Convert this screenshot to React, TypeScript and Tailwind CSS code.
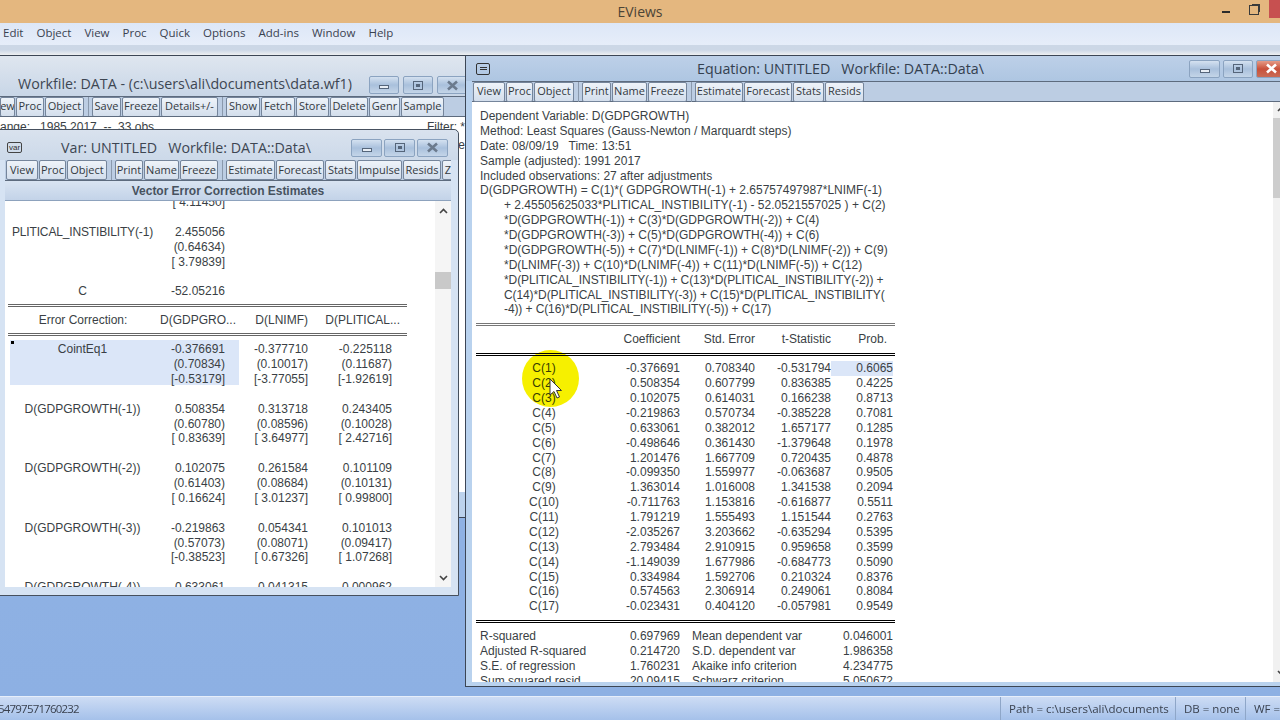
import type { ReactNode } from 'react'

const sans = "font-['Liberation_Sans',Arial,sans-serif]"
const ui = "font-['Open_Sans','Noto_Sans',sans-serif]"

function ToolBtn({ label, w }: { label: string; w: string }) {
  return (
    <div className={`${w} h-[20px] shrink-0 overflow-hidden flex items-center justify-center border border-[#75859b] rounded-[2px] bg-gradient-to-b from-[#eef3f9] to-[#d3deec] text-[11px] text-[#33393f] whitespace-nowrap`}>
      {label}
    </div>
  )
}

function Sep() {
  return <div className="w-[6px] h-[20px] shrink-0 flex justify-center"><div className="w-[1px] h-full bg-[#8a99ad]" /></div>
}

function WinBtn({ kind, w, red }: { kind: 'min' | 'max' | 'close'; w: string; red?: boolean }) {
  return (
    <div className={`${w} h-[18px] shrink-0 flex items-center justify-center border border-[#8ba3c0] rounded-[2px] ${red ? 'bg-gradient-to-b from-[#e49a86] via-[#c8503a] to-[#c96b55]' : 'bg-gradient-to-b from-[#d4e1f0] via-[#a9c0dc] to-[#c4d5e8]'}`}>
      {kind === 'min' && <div className="w-[10px] h-[4px] mt-[4px] border border-[#55657a] bg-[#e8eef5]" />}
      {kind === 'max' && <div className="w-[10px] h-[9px] border border-[#55657a] flex items-center justify-center"><div className="w-[4px] h-[3px] bg-[#55657a]" /></div>}
      {kind === 'close' && (
        <svg width="13" height="11" viewBox="0 0 13 11">
          <path d="M2 1.5 L11 9.5 M11 1.5 L2 9.5" stroke={red ? '#ffffff' : '#6b7a8d'} strokeWidth="2.6" />
        </svg>
      )}
    </div>
  )
}

function Double({ className }: { className: string }) {
  return <div className={`h-[3px] border-y ${className}`} />
}

function ScrollArrow({ up }: { up: boolean }) {
  return (
    <svg width="9" height="6" viewBox="0 0 9 6" className="shrink-0">
      <path d={up ? 'M1 5 L4.5 1.5 L8 5' : 'M1 1 L4.5 4.5 L8 1'} fill="none" stroke="#444" strokeWidth="1.6" />
    </svg>
  )
}

type Row = [string, string, string, string]

const varBlocks: Row[][] = [
  [['D(GDPGROWTH(-1))', '0.508354', '0.313718', '0.243405'], ['', '(0.60780)', '(0.08596)', '(0.10028)'], ['', '[ 0.83639]', '[ 3.64977]', '[ 2.42716]']],
  [['D(GDPGROWTH(-2))', '0.102075', '0.261584', '0.101109'], ['', '(0.61403)', '(0.08684)', '(0.10131)'], ['', '[ 0.16624]', '[ 3.01237]', '[ 0.99800]']],
  [['D(GDPGROWTH(-3))', '-0.219863', '0.054341', '0.101013'], ['', '(0.57073)', '(0.08071)', '(0.09417)'], ['', '[-0.38523]', '[ 0.67326]', '[ 1.07268]']],
  [['D(GDPGROWTH(-4))', '0.633061', '0.041315', '0.000962']],
]

const coef: string[][] = [
  ['C(1)', '-0.376691', '0.708340', '-0.531794', '0.6065'],
  ['C(2)', '0.508354', '0.607799', '0.836385', '0.4225'],
  ['C(3)', '0.102075', '0.614031', '0.166238', '0.8713'],
  ['C(4)', '-0.219863', '0.570734', '-0.385228', '0.7081'],
  ['C(5)', '0.633061', '0.382012', '1.657177', '0.1285'],
  ['C(6)', '-0.498646', '0.361430', '-1.379648', '0.1978'],
  ['C(7)', '1.201476', '1.667709', '0.720435', '0.4878'],
  ['C(8)', '-0.099350', '1.559977', '-0.063687', '0.9505'],
  ['C(9)', '1.363014', '1.016008', '1.341538', '0.2094'],
  ['C(10)', '-0.711763', '1.153816', '-0.616877', '0.5511'],
  ['C(11)', '1.791219', '1.555493', '1.151544', '0.2763'],
  ['C(12)', '-2.035267', '3.203662', '-0.635294', '0.5395'],
  ['C(13)', '2.793484', '2.910915', '0.959658', '0.3599'],
  ['C(14)', '-1.149039', '1.677986', '-0.684773', '0.5090'],
  ['C(15)', '0.334984', '1.592706', '0.210324', '0.8376'],
  ['C(16)', '0.574563', '2.306914', '0.249061', '0.8084'],
  ['C(17)', '-0.023431', '0.404120', '-0.057981', '0.9549'],
]

const stats: string[][] = [
  ['R-squared', '0.697969', 'Mean dependent var', '0.046001'],
  ['Adjusted R-squared', '0.214720', 'S.D. dependent var', '1.986358'],
  ['S.E. of regression', '1.760231', 'Akaike info criterion', '4.234775'],
  ['Sum squared resid', '20.09415', 'Schwarz criterion', '5.050672'],
]

const eqHead = [
  'Dependent Variable: D(GDPGROWTH)',
  'Method: Least Squares (Gauss-Newton / Marquardt steps)',
  'Date: 08/09/19   Time: 13:51',
  'Sample (adjusted): 1991 2017',
  'Included observations: 27 after adjustments',
  'D(GDPGROWTH) = C(1)*( GDPGROWTH(-1) + 2.65757497987*LNIMF(-1)',
]

const eqIndent = [
  '+ 2.45505625033*PLITICAL_INSTIBILITY(-1) - 52.0521557025 ) + C(2)',
  '*D(GDPGROWTH(-1)) + C(3)*D(GDPGROWTH(-2)) + C(4)',
  '*D(GDPGROWTH(-3)) + C(5)*D(GDPGROWTH(-4)) + C(6)',
  '*D(GDPGROWTH(-5)) + C(7)*D(LNIMF(-1)) + C(8)*D(LNIMF(-2)) + C(9)',
  '*D(LNIMF(-3)) + C(10)*D(LNIMF(-4)) + C(11)*D(LNIMF(-5)) + C(12)',
  '*D(PLITICAL_INSTIBILITY(-1)) + C(13)*D(PLITICAL_INSTIBILITY(-2)) +',
  'C(14)*D(PLITICAL_INSTIBILITY(-3)) + C(15)*D(PLITICAL_INSTIBILITY(',
  '-4)) + C(16)*D(PLITICAL_INSTIBILITY(-5)) + C(17)',
]

const varGrid = 'grid grid-cols-[149px_68px_83px_84px] w-[384px] leading-[14.875px] h-[14.875px] whitespace-pre'
const eqCols = 'grid grid-cols-[136px_68px_75px_76px_62px] w-[417px]'

function VarRow({ row }: { row: Row }) {
  return (
    <div className={varGrid}>
      <div className="text-center">{row[0].startsWith('PLITICAL') ? <span className="tracking-[-0.15px]">{row[0]}</span> : row[0]}</div>
      <div className="text-right">{row[1]}</div>
      <div className="text-right">{row[2]}</div>
      <div className="text-right">{row[3]}</div>
    </div>
  )
}

function Toolbar({ children, className }: { children: ReactNode; className: string }) {
  return <div className={`flex gap-[1px] items-center h-[21px] ${ui} ${className}`}>{children}</div>
}

export default function App() {
  return (
    <div className={`w-[1280px] h-[720px] overflow-hidden flex flex-col relative ${sans} text-[12px] text-[#3a3f45]`}>
      {/* app title bar */}
      <div className="h-[23px] shrink-0 bg-[#e4b77f] flex items-start relative">
        <div className={`w-full text-center text-[14px] leading-[23px] text-[#4b4436] ${ui}`}>EViews</div>
        <div className="absolute right-0 top-0 flex items-start">
          <div className="w-[8px] h-[2px] mt-[11px] bg-[#2b2b2b] mr-[19px]" />
          <div className="w-[10px] h-[10px] mt-[5px] mr-[10px] border border-[#3a3a3a] shadow-[2px_-2px_0_-1px_#3a3a3a]" />
          <div className="w-[11px] h-[18px] bg-[#c75050]" />
        </div>
      </div>

      {/* menu */}
      <div className={`h-[22px] shrink-0 pb-[3px] bg-gradient-to-b from-[#dde7f7] to-[#e6edf9] flex items-center gap-[13px] pl-[3px] text-[11.5px] text-[#3a4250] ${ui}`}>
        {['Edit', 'Object', 'View', 'Proc', 'Quick', 'Options', 'Add-ins', 'Window', 'Help'].map((m) => <span key={m}>{m}</span>)}
      </div>
      <div className="h-[10px] shrink-0 bg-gradient-to-b from-[#ccd7e6] via-[#ccd7e6] to-[#eef0f2]" />

      {/* mdi area */}
      <div className="flex-1 relative bg-gradient-to-b from-[#94b6e6] to-[#8db0e3] border-b border-[#e6eefa]">
        {/* workfile window, behind */}
        <div className="absolute left-[-10px] top-0 w-[490px] h-[463px] border border-[#3c4655] bg-[#bcd2ec] flex flex-col">
          <div className="h-[40px] shrink-0 flex items-end pb-[2px] pl-[27px] bg-gradient-to-b from-[#dfe6ef] to-[#c8d6e7]">
            <div className={`w-[351px] text-[14.25px] leading-[20px] text-[#3d4652] whitespace-nowrap ${ui}`}>{'Workfile: DATA - (c:\\users\\ali\\documents\\data.wf1)'}</div>
            <div className="flex gap-[4px]">
              <WinBtn kind="min" w="w-[30px]" />
              <WinBtn kind="max" w="w-[30px]" />
              <WinBtn kind="close" w="w-[30px]" />
            </div>
          </div>
          <Toolbar className="shrink-0 bg-[#bccde3] border-y border-[#5d6b7e] pl-[9px] overflow-hidden">
            <ToolBtn label="ew" w="w-[15px]" />
            <ToolBtn label="Proc" w="w-[28px]" />
            <ToolBtn label="Object" w="w-[39px]" />
            <Sep />
            <ToolBtn label="Save" w="w-[29px]" />
            <ToolBtn label="Freeze" w="w-[38px]" />
            <ToolBtn label="Details+/-" w="w-[57px]" />
            <Sep />
            <ToolBtn label="Show" w="w-[34px]" />
            <ToolBtn label="Fetch" w="w-[34px]" />
            <ToolBtn label="Store" w="w-[33px]" />
            <ToolBtn label="Delete" w="w-[38px]" />
            <ToolBtn label="Genr" w="w-[31px]" />
            <ToolBtn label="Sample" w="w-[43px]" />
          </Toolbar>
          <div className="flex-1 bg-white mb-[25px] pl-[9px] pr-[14px] whitespace-pre leading-[20px]">
            <div className="flex justify-between">
              <span>{'ange:   1985 2017  --  33 obs'}</span>
              <span>Filter: *</span>
            </div>
            <div className="text-right leading-[16px]">e</div>
          </div>
        </div>

        {/* var window */}
        <div className="absolute left-[-2px] top-[74px] w-[461px] h-[467px] border border-[#46505e] rounded-tr-[5px] bg-[#d6e3f3] flex flex-col">
          <div className="h-[30px] shrink-0 flex items-center pl-[8px] pt-[5px] bg-gradient-to-b from-[#d9e2ee] to-[#ccd9e9] rounded-tr-[5px]">
            <div className="w-[15px] h-[11px] border border-[#444] rounded-[2px] text-[8px] leading-[9px] text-center text-[#333]">var</div>
            <div className={`w-[290px] ml-[39px] text-[14.25px] text-[#3d4652] whitespace-pre ${ui}`}>{'Var: UNTITLED   Workfile: DATA::Data\\'}</div>
            <div className="flex gap-[2px]">
              <WinBtn kind="min" w="w-[31px]" />
              <WinBtn kind="max" w="w-[31px]" />
              <WinBtn kind="close" w="w-[31px]" />
            </div>
          </div>
          <div className="flex-1 min-h-0 flex flex-col ml-[6px] mr-[7px] mb-[8px]">
            <Toolbar className="shrink-0 bg-[#bccde3] border-b border-[#5d6b7e] overflow-hidden pl-[1px]">
              <ToolBtn label="View" w="w-[32px]" />
              <ToolBtn label="Proc" w="w-[27px]" />
              <ToolBtn label="Object" w="w-[40px]" />
              <Sep />
              <ToolBtn label="Print" w="w-[28px]" />
              <ToolBtn label="Name" w="w-[35px]" />
              <ToolBtn label="Freeze" w="w-[38px]" />
              <Sep />
              <ToolBtn label="Estimate" w="w-[49px]" />
              <ToolBtn label="Forecast" w="w-[48px]" />
              <ToolBtn label="Stats" w="w-[31px]" />
              <ToolBtn label="Impulse" w="w-[45px]" />
              <ToolBtn label="Resids" w="w-[38px]" />
              <ToolBtn label="Z" w="w-[12px]" />
            </Toolbar>
            <div className="h-[20px] shrink-0 flex items-center justify-center bg-gradient-to-b from-[#d9e4f2] to-[#c3d3e8] border-b border-[#8da2bd] font-bold text-[12px] tracking-[-0.03px] text-[#47525f]">
              Vector Error Correction Estimates
            </div>
            <div className="flex-1 min-h-0 flex bg-white">
              <div className="flex-1 overflow-hidden pl-[3px]">
                <div className="mt-[-6px] leading-[14.875px]">
                  <VarRow row={['', '[ 4.11450]', '', '']} />
                  <div className="h-[14.875px]" />
                  <VarRow row={['PLITICAL_INSTIBILITY(-1)', '2.455056', '', '']} />
                  <VarRow row={['', '(0.64634)', '', '']} />
                  <VarRow row={['', '[ 3.79839]', '', '']} />
                  <div className="h-[14.875px]" />
                  <VarRow row={['C', '-52.05216', '', '']} />
                  <Double className="mt-[5px] w-[399px] border-[#666]" />
                  <div className="grid grid-cols-[150px_78px_72px_92px] w-[392px] h-[26px] items-center">
                    <div className="text-center">Error Correction:</div>
                    <div className="text-right">D(GDPGRO...</div>
                    <div className="text-right">D(LNIMF)</div>
                    <div className="text-right">D(PLITICAL...</div>
                  </div>
                  <Double className="w-[399px] border-[#666]" />
                  <div className="relative mt-[6px] pb-[14.875px]">
                    <div className="absolute left-[2px] top-[-2px] h-[45px] w-[229px] bg-[#dbe6f8]" />
                    <div className="absolute left-[3px] top-[-1px] w-[3px] h-[3px] bg-black" />
                    <div className="relative">
                      <VarRow row={['CointEq1', '-0.376691', '-0.377710', '-0.225118']} />
                      <VarRow row={['', '(0.70834)', '(0.10017)', '(0.11687)']} />
                      <VarRow row={['', '[-0.53179]', '[-3.77055]', '[-1.92619]']} />
                    </div>
                  </div>
                  {varBlocks.map((b) => (
                    <div key={b[0][0]} className="pb-[14.875px]">
                      {b.map((r, i) => <VarRow key={i} row={r} />)}
                    </div>
                  ))}
                </div>
              </div>
              <div className="w-[16px] shrink-0 flex flex-col items-center bg-[#f5f5f5]">
                <div className="mt-[7px]"><ScrollArrow up /></div>
                <div className="w-full h-[17px] mt-[58px] bg-[#c9c9c9]" />
                <div className="mt-auto mb-[6px]"><ScrollArrow up={false} /></div>
              </div>
            </div>
          </div>
        </div>

        {/* equation window */}
        <div className="absolute left-[465px] top-0 w-[840px] h-[632px] border border-[#3c4655] bg-[#b9d2ee] flex flex-col">
          <div className="h-[25px] shrink-0 flex items-center pl-[10px] bg-gradient-to-b from-[#bdd0e8] to-[#aec6e2]">
            <div className="w-[14px] h-[12px] border-[1.5px] border-[#333] rounded-[2px] flex flex-col items-center justify-center gap-[1px]">
              <div className="w-[7px] h-[1px] bg-[#333]" />
              <div className="w-[7px] h-[1px] bg-[#333]" />
            </div>
            <div className={`w-[492px] ml-[207px] text-[14.25px] text-[#33404f] whitespace-pre ${ui}`}>{'Equation: UNTITLED   Workfile: DATA::Data\\'}</div>
            <div className="flex gap-[3px]">
              <WinBtn kind="min" w="w-[31px]" />
              <WinBtn kind="max" w="w-[30px]" />
              <WinBtn kind="close" w="w-[30px]" red />
            </div>
          </div>
          <div className="flex-1 min-h-0 flex flex-col ml-[6px] mb-[4px]">
            <Toolbar className="shrink-0 bg-[#bccde3] border-y border-[#5d6b7e] pl-[1px]">
              <ToolBtn label="View" w="w-[32px]" />
              <ToolBtn label="Proc" w="w-[27px]" />
              <ToolBtn label="Object" w="w-[40px]" />
              <Sep />
              <ToolBtn label="Print" w="w-[29px]" />
              <ToolBtn label="Name" w="w-[35px]" />
              <ToolBtn label="Freeze" w="w-[39px]" />
              <Sep />
              <ToolBtn label="Estimate" w="w-[48px]" />
              <ToolBtn label="Forecast" w="w-[48px]" />
              <ToolBtn label="Stats" w="w-[31px]" />
              <ToolBtn label="Resids" w="w-[39px]" />
            </Toolbar>
            <div className="flex-1 min-h-0 flex bg-white">
              <div className="w-[801px] shrink-0 overflow-hidden">
                <div className="pl-[8px] pt-[7px] leading-[14.875px] whitespace-pre">
                  {eqHead.map((t) => <div key={t} className="h-[14.875px]">{t}</div>)}
                  {eqIndent.map((t) => (
                    <div key={t} className={`h-[14.875px] pl-[24px] ${t.includes('PLITICAL_INSTIBILITY(-') && !t.startsWith('+') ? 'tracking-[-0.1px]' : ''}`}>{t}</div>
                  ))}
                </div>
                <div className="pl-[4px] mt-[6px]">
                  <Double className="w-[419px] border-[#777]" />
                  <div className={`${eqCols} h-[27px] pb-[2px] items-center`}>
                    <div />
                    <div className="text-right">Coefficient</div>
                    <div className="text-right">Std. Error</div>
                    <div className="text-right">t-Statistic</div>
                    <div className="text-right pr-[6px]">Prob.</div>
                  </div>
                  <Double className="w-[419px] border-black" />
                  <div className="mt-[5px]">
                    {coef.map((r, i) => (
                      <div key={r[0]} className={`${eqCols} h-[14.875px] leading-[14.875px]`}>
                        <div className="text-center">{r[0]}</div>
                        <div className="text-right">{r[1]}</div>
                        <div className="text-right">{r[2]}</div>
                        <div className="text-right">{r[3]}</div>
                        <div className={`text-right ${i === 0 ? 'bg-[#dbe6f8]' : ''}`}>{r[4]}</div>
                      </div>
                    ))}
                  </div>
                  <Double className="mt-[6px] w-[419px] border-black" />
                  <div className="mt-[6px]">
                    {stats.map((r) => (
                      <div key={r[0]} className="grid grid-cols-[135px_69px_12px_136px_65px] w-[417px] h-[14.875px] leading-[14.875px]">
                        <div className="pl-[4px] whitespace-nowrap">{r[0]}</div>
                        <div className="text-right">{r[1]}</div>
                        <div />
                        <div className="whitespace-nowrap">{r[2]}</div>
                        <div className="text-right">{r[3]}</div>
                      </div>
                    ))}
                  </div>
                </div>
              </div>
              <div className="w-[17px] shrink-0 flex flex-col items-center bg-[#f1f1f1]">
                <div className="mt-[4px] mb-[6px]"><ScrollArrow up /></div>
                <div className="w-full h-[80px] bg-[#cdcdcd]" />
                <div className="mt-auto mb-[6px]"><ScrollArrow up={false} /></div>
              </div>
            </div>
          </div>
        </div>
      </div>

      {/* status bar */}
      <div className={`h-[23px] shrink-0 flex items-center bg-gradient-to-b from-[#cddcf4] to-[#a5c1ea] text-[11.5px] text-[#3a4250] whitespace-nowrap ${ui}`}>
        <div className="w-[1000px] shrink-0 overflow-hidden"><span className="ml-[-2px] block tracking-[-0.8px]">54797571760232</span></div>
        <div className="w-[175px] h-full shrink-0 flex items-center pl-[8px] border-l border-[#8ea6c8]">{'Path = c:\\users\\ali\\documents'}</div>
        <div className="w-[70px] h-full shrink-0 flex items-center pl-[8px] border-l border-[#8ea6c8]">DB = none</div>
        <div className="flex-1 h-full flex items-center pl-[8px] border-l border-[#8ea6c8]">WF = data</div>
      </div>

      {/* screen recorder cursor highlight */}
      <div className="absolute left-[522px] top-[350px] w-[57px] h-[57px] rounded-full bg-[#f6f000] mix-blend-multiply" />
      <svg className="absolute left-[549px] top-[378px]" width="14" height="22" viewBox="0 0 14 22">
        <path d="M1 1 L1 17 L5 13.5 L8 20 L10.5 19 L7.5 12.5 L12.5 12.5 Z" fill="#fff" stroke="#333" strokeWidth="1" />
      </svg>
    </div>
  )
}
